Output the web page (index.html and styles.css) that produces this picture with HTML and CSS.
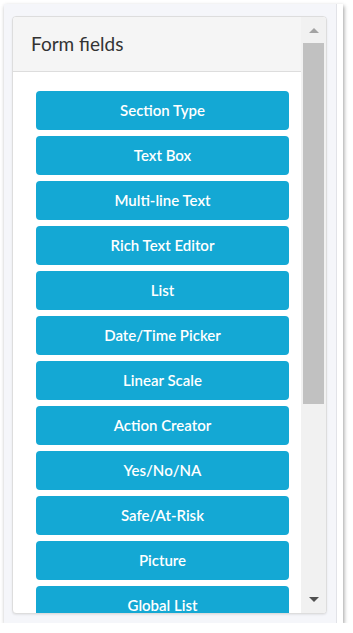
FILE: index.html
```html
<!DOCTYPE html>
<html>
<head>
<meta charset="utf-8">
<link rel="stylesheet" href="styles.css">
</head>
<body>
<div class="frame">
  <div class="frame-main">
    <div class="panel">
      <div class="panel-content">
        <div class="panel-header">Form fields</div>
        <div class="field-list">
          <button class="field-btn">Section Type</button>
          <button class="field-btn">Text Box</button>
          <button class="field-btn">Multi-line Text</button>
          <button class="field-btn">Rich Text Editor</button>
          <button class="field-btn">List</button>
          <button class="field-btn">Date/Time Picker</button>
          <button class="field-btn">Linear Scale</button>
          <button class="field-btn">Action Creator</button>
          <button class="field-btn">Yes/No/NA</button>
          <button class="field-btn">Safe/At-Risk</button>
          <button class="field-btn">Picture</button>
          <button class="field-btn">Global List</button>
        </div>
      </div>
      <div class="scrollbar">
        <div class="arrow arrow-up"></div>
        <div class="track"><div class="thumb"></div></div>
        <div class="arrow arrow-down"></div>
      </div>
    </div>
  </div>
  <div class="frame-strip"></div>
</div>
</body>
</html>
```
FILE: styles.css
```css
html, body {
  margin: 0;
  padding: 0;
  background: #ffffff;
}
body {
  font-family: Lato, "Open Sans", sans-serif;
}
.frame {
  margin: 4px 0 0 4px;
  width: 339px;
  height: 619px;
  background: #f5f6fa;
  box-shadow: 1px 2px 4px rgba(0, 0, 0, 0.38);
  display: flex;
}
.frame-main {
  flex: 1;
  padding: 12px 9px 9px 8px;
  display: flex;
}
.frame-strip {
  width: 6px;
  background: #ffffff;
  border-left: 1px solid #e2e3e8;
}
.panel {
  flex: 1;
  display: flex;
  background: #ffffff;
  border: 1px solid #dddddd;
  border-radius: 4px;
  box-shadow: 0 1px 2px rgba(0, 0, 0, 0.08);
  overflow: hidden;
}
.panel-content {
  flex: 1;
  display: flex;
  flex-direction: column;
  overflow: hidden;
}
.panel-header {
  flex: none;
  height: 55px;
  box-sizing: border-box;
  padding: 15px 0 0 18px;
  background: #f5f5f5;
  border-bottom: 1px solid #dddddd;
  font-size: 19px;
  line-height: 24px;
  color: #333333;
}
.field-list {
  display: flex;
  flex-direction: column;
  gap: 6px;
  padding: 19px 12px 0 23px;
}
.field-btn {
  flex: none;
  height: 39px;
  border: none;
  border-radius: 4px;
  background: #14a8d4;
  color: #ffffff;
  font-family: Lato, "Open Sans", sans-serif;
  font-weight: 600;
  font-size: 15px;
  padding: 0 0 2px 0;
}
.scrollbar {
  flex: none;
  width: 25px;
  background: #f1f1f1;
  display: flex;
  flex-direction: column;
  align-items: center;
}
.arrow {
  flex: none;
  width: 0;
  height: 0;
  border-left: 5px solid transparent;
  border-right: 5px solid transparent;
}
.arrow-up {
  margin-top: 11px;
  border-bottom: 5px solid #a3a3a3;
}
.arrow-down {
  margin-bottom: 11px;
  border-top: 5px solid #505050;
}
.track {
  flex: 1;
  align-self: stretch;
  padding: 10px 2px 0 2px;
}
.thumb {
  height: 361px;
  background: #c1c1c1;
}
```
